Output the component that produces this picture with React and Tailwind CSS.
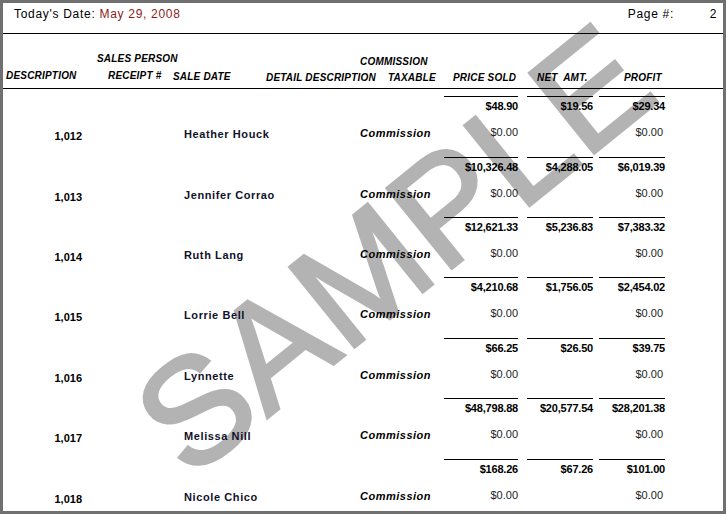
import React from 'react';

const sales = [
  { id: '1,012', name: 'Heather Houck', price: '$48.90', net: '$19.56', profit: '$29.34', h: 'h-[61px]' },
  { id: '1,013', name: 'Jennifer Corrao', price: '$10,326.48', net: '$4,288.05', profit: '$6,019.39', h: 'h-[60px]' },
  { id: '1,014', name: 'Ruth Lang', price: '$12,621.33', net: '$5,236.83', profit: '$7,383.32', h: 'h-[60px]' },
  { id: '1,015', name: 'Lorrie Bell', price: '$4,210.68', net: '$1,756.05', profit: '$2,454.02', h: 'h-[61px]' },
  { id: '1,016', name: 'Lynnette', price: '$66.25', net: '$26.50', profit: '$39.75', h: 'h-[60px]' },
  { id: '1,017', name: 'Melissa Nill', price: '$48,798.88', net: '$20,577.54', profit: '$28,201.38', h: 'h-[61px]' },
  { id: '1,018', name: 'Nicole Chico', price: '$168.26', net: '$67.26', profit: '$101.00', h: 'h-[60px]' },
];

const Label = ({ className, children }) => (
  <div className={`text-[10px] leading-[12px] font-bold italic tracking-[0.2px] whitespace-pre ${className}`}>
    {children}
  </div>
);

const App = () => {
  const renderGroup = (row) => (
    <div key={row.id} className={`${row.h} flex flex-col`}>
      <div className="flex text-[11px] leading-[13px] font-bold tracking-[-0.2px] text-black">
        <div className="w-[441px]" />
        <div className="w-[74px] border-t border-black pt-[2.5px] text-right">{row.price}</div>
        <div className="w-[9px]" />
        <div className="w-[66px] border-t border-black pt-[2.5px] text-right">{row.net}</div>
        <div className="w-[6px]" />
        <div className="w-[66px] border-t border-black pt-[2.5px] text-right">{row.profit}</div>
      </div>
      <div className="mt-[12.5px] flex items-start text-[11px] leading-[13px]">
        <div className="w-[79px] pt-[4.5px] text-right font-bold text-black">{row.id}</div>
        <div className="w-[102px]" />
        <div className="w-[176px] pt-[3px] font-bold tracking-[0.6px] text-[#10122a]">{row.name}</div>
        <div className="w-[84px] pt-[1.5px] font-bold italic tracking-[0.5px] text-black">Commission</div>
        <div className="w-[74px] pt-[0.5px] text-right text-[#222]">$0.00</div>
        <div className="w-[81px]" />
        <div className="w-[66px] pt-[0.5px] pr-[2px] text-right text-[#222]">$0.00</div>
      </div>
    </div>
  );

  return (
    <div className="relative w-[726px] h-[514px] overflow-hidden bg-white border-[3px] border-[#707070] font-['Liberation_Sans',Arial,sans-serif] text-black">
      {/* watermark sits under the report text */}
      <div className="absolute inset-0 flex items-center justify-center pointer-events-none">
        <span className="translate-x-[30px] -translate-y-[8px] -rotate-[39deg] text-[150px] leading-none text-[#b3b3b3] [-webkit-text-stroke:3px_#b3b3b3] whitespace-nowrap">
          SAMPLE
        </span>
      </div>

      <div className="relative">
        <div className="h-[31px] border-b border-black flex justify-between pt-[4px] pl-[11px] pr-[6px] text-[12px] leading-[14px] tracking-[0.7px]">
          <div>
            Today's Date: <span className="text-[#8a1c1c]">May 29, 2008</span>
          </div>
          <div className="flex">
            <span>Page #:</span>
            <span className="w-[43px] text-right">2</span>
          </div>
        </div>

        <div className="h-[55px] border-b border-black flex flex-col pt-[19px] text-black">
          <div className="h-[15px] flex items-start">
            <div className="w-[94px]" />
            <Label className="w-[263px]">SALES PERSON</Label>
            <Label className="mt-[2.5px]">COMMISSION</Label>
          </div>
          <div className="flex items-start">
            <Label className="w-[105px] pl-[3px] mt-[1.5px]">DESCRIPTION</Label>
            <Label className="w-[65px] mt-[2px]">RECEIPT #</Label>
            <Label className="w-[93px] mt-[3px]">SALE DATE</Label>
            <Label className="w-[122px] mt-[4px]">DETAIL DESCRIPTION</Label>
            <Label className="w-[65px] mt-[4px]">TAXABLE</Label>
            <Label className="w-[84px] mt-[4px]">PRICE SOLD</Label>
            <Label className="w-[87px] mt-[4px]">NET  AMT.</Label>
            <Label className="mt-[4px]">PROFIT</Label>
          </div>
        </div>

        <div className="pt-[7px]">{sales.map(renderGroup)}</div>
      </div>
    </div>
  );
};

export default App;
